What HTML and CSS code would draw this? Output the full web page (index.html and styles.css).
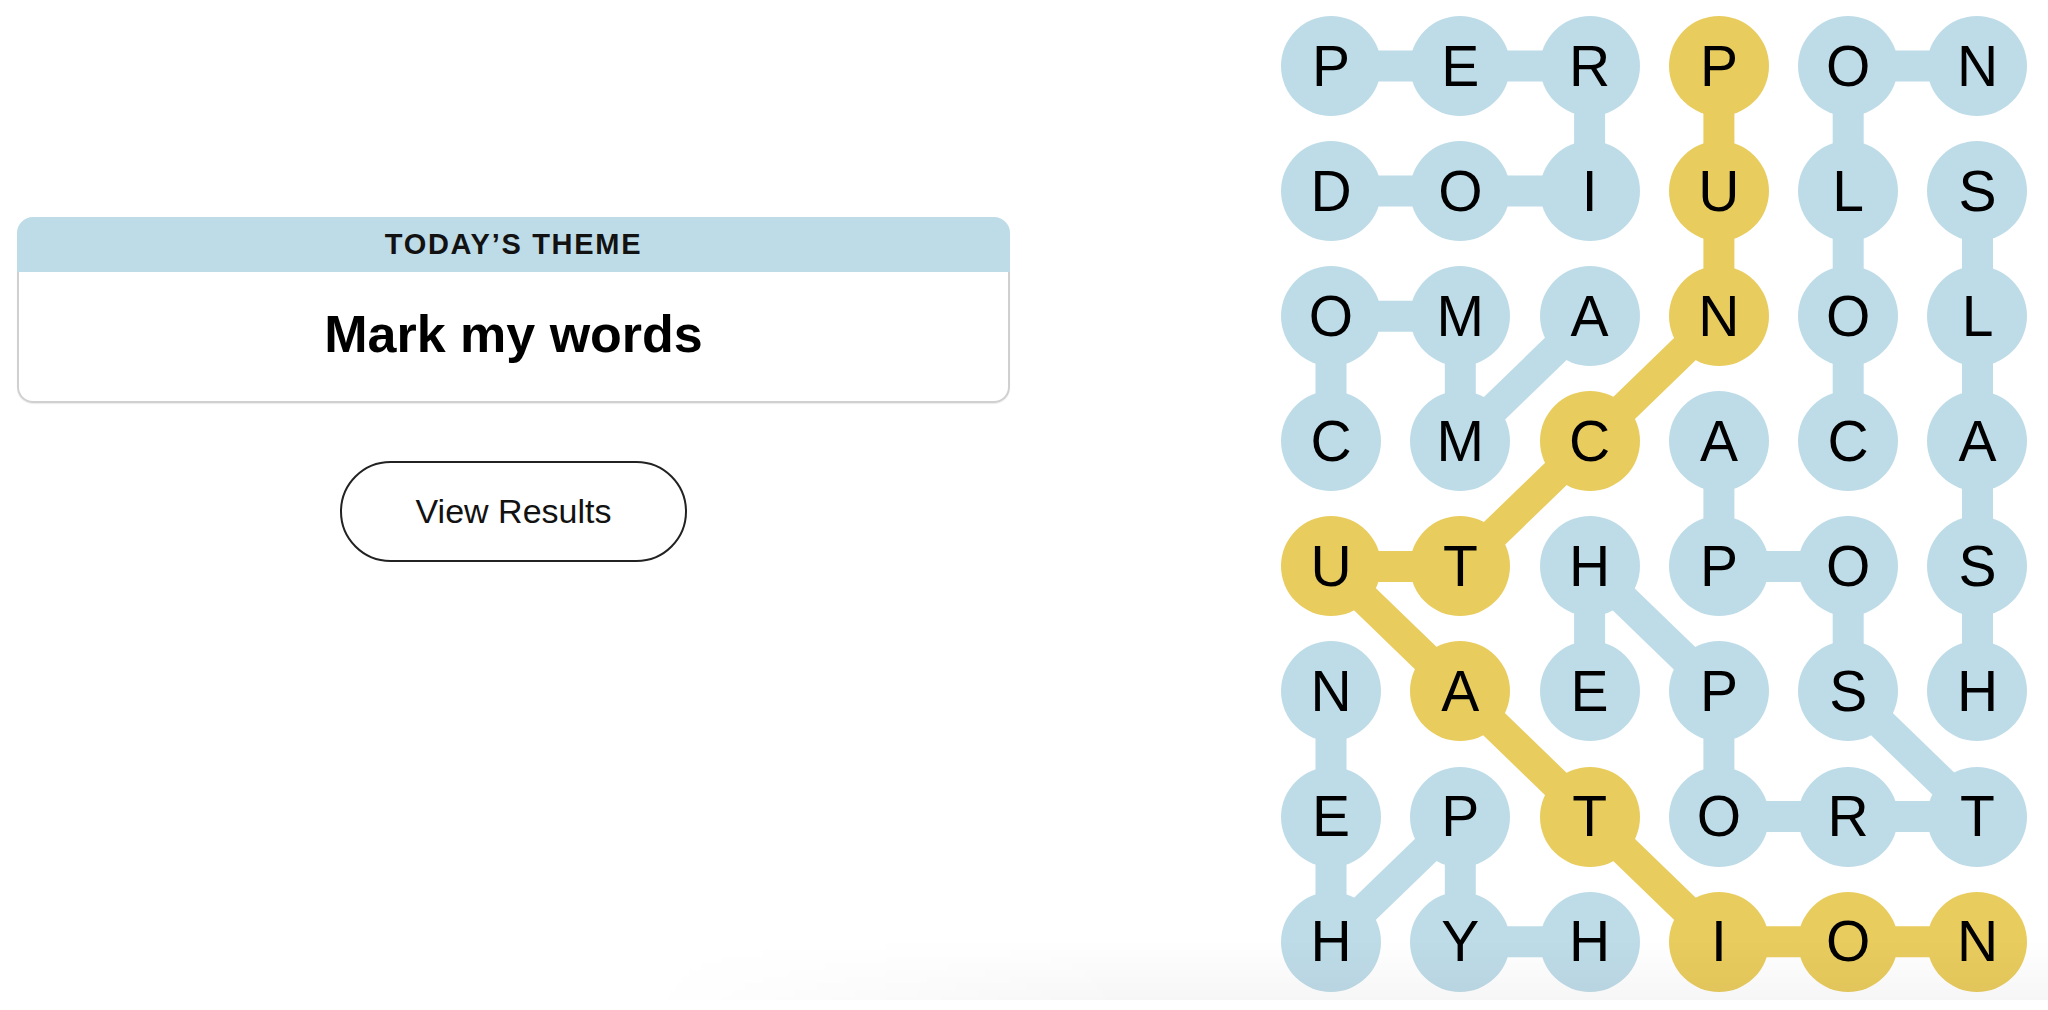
FILE: index.html
```html
<!DOCTYPE html>
<html lang="en">
<head>
<meta charset="utf-8">
<title>Strands</title>
<link rel="stylesheet" href="styles.css">
</head>
<body>
<main class="page">
  <section class="info">
    <div class="theme-card">
      <div class="theme-head">TODAY’S THEME</div>
      <div class="theme-body"><h1 class="theme-title">Mark my words</h1></div>
    </div>
    <button class="results-btn" type="button">View Results</button>
  </section>
  <section class="board">
    <svg class="links" viewBox="0 0 747 976" width="747" height="976" aria-hidden="true">
      <g class="link-blue">
        <line x1="50" y1="50" x2="308.6" y2="50"/>
        <line x1="308.6" y1="50" x2="308.6" y2="175.1"/>
        <line x1="50" y1="175.1" x2="308.6" y2="175.1"/>
        <line x1="567.2" y1="50" x2="696.5" y2="50"/>
        <line x1="567.2" y1="50" x2="567.2" y2="425.3"/>
        <line x1="696.5" y1="175.1" x2="696.5" y2="675.5"/>
        <line x1="50" y1="300.2" x2="179.3" y2="300.2"/>
        <line x1="50" y1="300.2" x2="50" y2="425.3"/>
        <line x1="179.3" y1="300.2" x2="179.3" y2="425.3"/>
        <line x1="179.3" y1="425.3" x2="308.6" y2="300.2"/>
        <line x1="437.9" y1="425.3" x2="437.9" y2="550.4"/>
        <line x1="437.9" y1="550.4" x2="567.2" y2="550.4"/>
        <line x1="567.2" y1="550.4" x2="567.2" y2="675.5"/>
        <line x1="567.2" y1="675.5" x2="696.5" y2="800.6"/>
        <line x1="437.9" y1="800.6" x2="696.5" y2="800.6"/>
        <line x1="437.9" y1="675.5" x2="437.9" y2="800.6"/>
        <line x1="308.6" y1="550.4" x2="308.6" y2="675.5"/>
        <line x1="308.6" y1="550.4" x2="437.9" y2="675.5"/>
        <line x1="50" y1="675.5" x2="50" y2="925.7"/>
        <line x1="50" y1="925.7" x2="179.3" y2="800.6"/>
        <line x1="179.3" y1="800.6" x2="179.3" y2="925.7"/>
        <line x1="179.3" y1="925.7" x2="308.6" y2="925.7"/>
      </g>
      <polyline class="link-gold" points="437.9,50 437.9,300.2 308.6,425.3 179.3,550.4 50,550.4 179.3,675.5 308.6,800.6 437.9,925.7 696.5,925.7"/>
    </svg>
    <div class="grid">
      <div class="cell">P</div><div class="cell">E</div><div class="cell">R</div><div class="cell gold">P</div><div class="cell">O</div><div class="cell">N</div>
      <div class="cell">D</div><div class="cell">O</div><div class="cell">I</div><div class="cell gold">U</div><div class="cell">L</div><div class="cell">S</div>
      <div class="cell">O</div><div class="cell">M</div><div class="cell">A</div><div class="cell gold">N</div><div class="cell">O</div><div class="cell">L</div>
      <div class="cell">C</div><div class="cell">M</div><div class="cell gold">C</div><div class="cell">A</div><div class="cell">C</div><div class="cell">A</div>
      <div class="cell gold">U</div><div class="cell gold">T</div><div class="cell">H</div><div class="cell">P</div><div class="cell">O</div><div class="cell">S</div>
      <div class="cell">N</div><div class="cell gold">A</div><div class="cell">E</div><div class="cell">P</div><div class="cell">S</div><div class="cell">H</div>
      <div class="cell">E</div><div class="cell">P</div><div class="cell gold">T</div><div class="cell">O</div><div class="cell">R</div><div class="cell">T</div>
      <div class="cell">H</div><div class="cell">Y</div><div class="cell">H</div><div class="cell gold">I</div><div class="cell gold">O</div><div class="cell gold">N</div>
    </div>
  </section>
</main>
<div class="bottom-fade"></div>
</body>
</html>
```
FILE: styles.css
```css
html, body {
  margin: 0;
  padding: 0;
  background: #ffffff;
}

body {
  width: 2048px;
  height: 1010px;
  overflow: hidden;
  position: relative;
  font-family: "Liberation Sans", Arial, Helvetica, sans-serif;
  color: #121212;
}

.page {
  display: flex;
  justify-content: space-between;
  align-items: flex-start;
  padding: 16px 20px 0 17px;
}

/* ---------- left column ---------- */
.info {
  width: 993px;
  padding-top: 201px;
  display: flex;
  flex-direction: column;
  align-items: center;
}

.theme-card {
  align-self: stretch;
  border-radius: 16px;
  box-shadow: 0 1px 1px rgba(0, 0, 0, 0.08);
}

.theme-head {
  height: 55px;
  background: #bedce8;
  border-radius: 16px 16px 0 0;
  display: flex;
  align-items: center;
  justify-content: center;
  font-weight: 700;
  font-size: 29px;
  letter-spacing: 1.7px;
  color: #121212;
}

.theme-body {
  border: 2px solid #d0d0d0;
  border-top: none;
  border-radius: 0 0 16px 16px;
  display: flex;
  align-items: center;
  justify-content: center;
  padding-bottom: 6px;
  height: 123px;
}

.theme-title {
  margin: 0;
  font-size: 52px;
  font-weight: 700;
  color: #000;
}

.results-btn {
  margin-top: 58px;
  width: 347px;
  height: 101px;
  border: 2px solid #222;
  border-radius: 51px;
  background: #fff;
  font-family: "Liberation Sans", Arial, sans-serif;
  font-size: 34px;
  color: #121212;
  cursor: pointer;
}

/* ---------- board ---------- */
.board {
  position: relative;
  width: 747px;
  height: 976px;
}

.links {
  position: absolute;
  left: 0;
  top: 0;
  z-index: 0;
}

.link-blue line {
  stroke: #bedce8;
  stroke-width: 31;
}

.link-gold {
  fill: none;
  stroke: #e9cc5e;
  stroke-width: 31;
  stroke-linejoin: round;
}

.grid {
  position: relative;
  z-index: 1;
  display: grid;
  grid-template-columns: repeat(6, 100px);
  grid-template-rows: repeat(8, 100px);
  column-gap: 29.3px;
  row-gap: 25.1px;
}

.cell {
  width: 100px;
  height: 100px;
  border-radius: 50%;
  background: #bedce8;
  display: flex;
  align-items: center;
  justify-content: center;
  font-size: 57px;
  line-height: 1;
  color: #000;
}

.cell.gold {
  background: #e9cc5e;
}

/* subtle fade at the bottom of the viewport */
.bottom-fade {
  position: absolute;
  left: 640px;
  right: 0;
  bottom: 10px;
  height: 60px;
  background: linear-gradient(to bottom, rgba(0, 0, 0, 0), rgba(0, 0, 0, 0.035));
  -webkit-mask-image: linear-gradient(to right, transparent, #000 35%);
  mask-image: linear-gradient(to right, transparent, #000 35%);
  pointer-events: none;
  z-index: 2;
}
```
